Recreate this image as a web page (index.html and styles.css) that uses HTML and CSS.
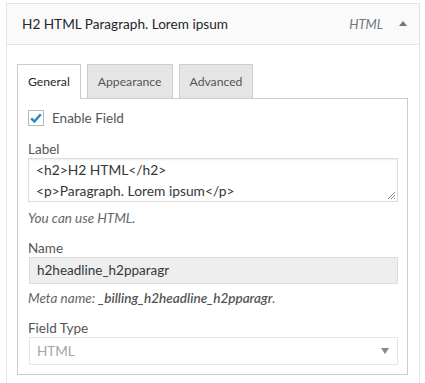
FILE: index.html
```html
<!DOCTYPE html>
<html lang="en">
<head>
<meta charset="UTF-8">
<title>Field settings</title>
<link rel="stylesheet" href="styles.css">
</head>
<body>

<div class="postbox">
    <div class="postbox-header">
        <h2 class="field-title">H2 HTML Paragraph. Lorem ipsum</h2>
        <span class="field-type">HTML</span>
        <span class="toggle-arrow"></span>
    </div>

    <div class="inside">
        <ul class="tabs">
            <li class="tab active">General</li>
            <li class="tab">Appearance</li>
            <li class="tab">Advanced</li>
        </ul>

        <div class="panel">
            <label class="check-row">
                <span class="checkbox">
                    <svg width="14" height="14" viewBox="0 0 14 14"><path d="M2.2 7.4 L5.4 10.6 L11.8 3.2" fill="none" stroke="#1e8cbe" stroke-width="2.4"/></svg>
                </span>
                Enable Field
            </label>

            <div class="field">
                <div class="field-label">Label</div>
                <div class="textarea">
                    <div>&lt;h2&gt;H2 HTML&lt;/h2&gt;</div>
                    <div>&lt;p&gt;Paragraph. Lorem ipsum&lt;/p&gt;</div>
                    <svg class="grip" width="9" height="9" viewBox="0 0 9 9"><path d="M8 1 L1 8 M8 4 L4 8 M8 7 L7 8" stroke="#888" stroke-width="1"/></svg>
                </div>
                <p class="description">You can use HTML.</p>
            </div>

            <div class="field">
                <div class="field-label">Name</div>
                <div class="input readonly">h2headline_h2pparagr</div>
                <p class="description">Meta name: <strong>_billing_h2headline_h2pparagr</strong>.</p>
            </div>

            <div class="field">
                <div class="field-label">Field Type</div>
                <div class="select">
                    <span>HTML</span>
                    <span class="select-arrow"></span>
                </div>
            </div>
        </div>
    </div>
</div>

</body>
</html>
```

FILE: styles.css
```css
body {
    margin: 0;
    padding: 3px 5px 0 6px;
    background-color: #ffffff;
    font-family: Lato, "Open Sans", Arial, sans-serif;
    font-size: 13.5px;
    color: #555555;
}
.postbox {
    border: 1px solid #e5e5e5;
    border-bottom: none;
    height: 380px;
    box-sizing: border-box;
}
.postbox-header {
    display: flex;
    align-items: center;
    height: 40px;
    padding: 0 12px 0 15px;
    background-color: #fafafa;
    border-bottom: 1px solid #e5e5e5;
}
.field-title {
    flex: 1;
    margin: 0;
    font-size: 13.6px;
    font-weight: 400;
    color: #23282d;
}
.field-type {
    font-style: italic;
    font-size: 13px;
    color: #72777c;
    margin-right: 16px;
}
.toggle-arrow {
    width: 0;
    height: 0;
    border-left: 4px solid transparent;
    border-right: 4px solid transparent;
    border-bottom: 5px solid #72777c;
    margin-top: -2px;
}
.inside {
    padding: 19px 11px 0 10px;
}
.tabs {
    display: flex;
    gap: 6px;
    list-style: none;
    margin: 0;
    padding: 0;
}
.tab {
    height: 33px;
    line-height: 34px;
    padding: 0 10px;
    font-size: 12.2px;
    background-color: #e5e5e5;
    border: 1px solid #cccccc;
    border-bottom: none;
    color: #555555;
}
.tab.active {
    background-color: #ffffff;
    color: #23282d;
    height: 34px;
    margin-bottom: -1px;
    position: relative;
}
.panel {
    border: 1px solid #cccccc;
    padding: 11px 9px 9px 10px;
}
.check-row {
    display: flex;
    align-items: center;
    gap: 8px;
    height: 16px;
    color: #555555;
}
.checkbox {
    width: 14px;
    height: 14px;
    border: 1px solid #b4b9be;
    display: flex;
    align-items: center;
    justify-content: center;
}
.field {
    margin-top: 14px;
}
.field + .field {
    margin-top: 11px;
}
.field-label {
    line-height: 18px;
}
.textarea {
    position: relative;
    height: 42px;
    border: 1px solid #dddddd;
    box-shadow: inset 0 1px 2px rgba(0, 0, 0, 0.07);
    padding: 0 7px;
    font-size: 13.8px;
    color: #32373c;
    line-height: 21px;
}
.grip {
    position: absolute;
    right: 1px;
    bottom: 1px;
}
.description {
    margin: 6px 0 0;
    font-style: italic;
    color: #666666;
    line-height: 20px;
}
.field + .field .description {
    margin-top: 4px;
}
.description strong {
    font-weight: 600;
    color: #555555;
}
.input {
    height: 25px;
    line-height: 25px;
    border: 1px solid #dddddd;
    padding: 0 7px;
    margin-left: 1px;
    color: #32373c;
}
.readonly {
    background-color: #eeeeee;
}
.select {
    display: flex;
    align-items: center;
    justify-content: space-between;
    height: 26px;
    border: 1px solid #e5e5e5;
    padding: 0 7px;
    margin-left: 1px;
    color: #a0a5aa;
}
.select-arrow {
    width: 0;
    height: 0;
    border-left: 4px solid transparent;
    border-right: 4px solid transparent;
    border-top: 6px solid #888888;
    margin-right: 1px;
}
```
